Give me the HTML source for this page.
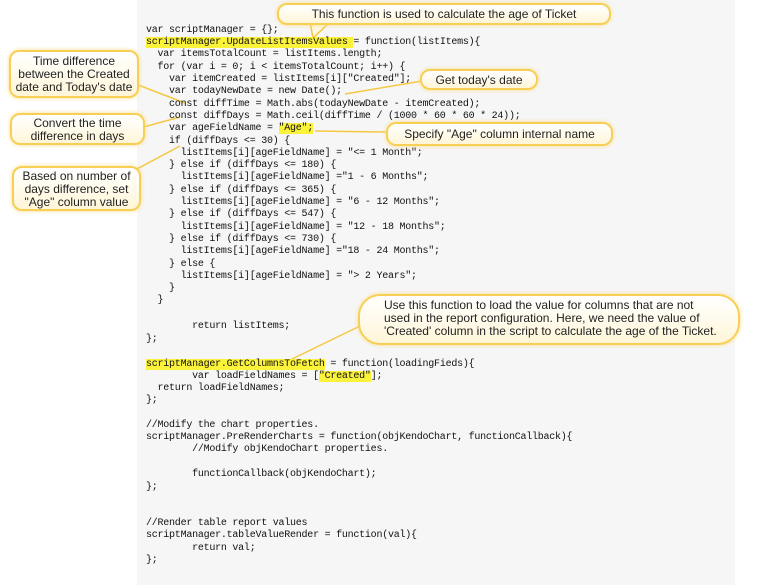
<!DOCTYPE html>
<html><head><style>
body{margin:0;width:768px;height:585px;background:#fff;position:relative;overflow:hidden;font-family:"Liberation Sans",sans-serif}
#panel{position:absolute;left:137px;top:0;width:598px;height:585px;background:#f6f6f6}
.l{position:absolute;left:146px;font-family:"Liberation Mono",monospace;font-size:10px;letter-spacing:-0.24px;color:#111;white-space:pre;line-height:12px;top:1px}
.hl{background:#fbf23a}
.c{position:absolute;border:2px solid #f7cf55;border-radius:10px;background:linear-gradient(#fff,#fff6d8);box-shadow:0 0 4px #f9dc8a;font-size:12px;color:#222;text-align:center;line-height:13px;box-sizing:border-box}
svg{position:absolute;left:0;top:0}
</style></head><body>
<div id="panel"></div>
<svg width="768" height="585"><g stroke="#f5c842" stroke-width="1.5" fill="#fff8e0">
<polygon points="310,22 330,22 313,38"/>
<line x1="120" y1="78" x2="185" y2="103"/>
<line x1="140" y1="128" x2="180" y2="117"/>
<line x1="120" y1="178" x2="180" y2="146"/>
<line x1="422" y1="81" x2="345" y2="94"/>
<line x1="386" y1="132" x2="315" y2="131"/>
<line x1="362" y1="325" x2="290" y2="360"/>
</g></svg>
<div class="l" style="top:25px">var scriptManager = {};</div>
<div class="l" style="top:37px"><span class="hl">scriptManager.UpdateListItemsValues </span>= function(listItems){</div>
<div class="l" style="top:49px">  var itemsTotalCount = listItems.length;</div>
<div class="l" style="top:62px">  for (var i = 0; i &lt; itemsTotalCount; i++) {</div>
<div class="l" style="top:74px">    var itemCreated = listItems[i]["Created"];</div>
<div class="l" style="top:86px">    var todayNewDate = new Date();</div>
<div class="l" style="top:99px">    const diffTime = Math.abs(todayNewDate - itemCreated);</div>
<div class="l" style="top:111px">    const diffDays = Math.ceil(diffTime / (1000 * 60 * 60 * 24));</div>
<div class="l" style="top:123px">    var ageFieldName = <span class="hl">"Age";</span></div>
<div class="l" style="top:136px">    if (diffDays &lt;= 30) {</div>
<div class="l" style="top:148px">      listItems[i][ageFieldName] = "&lt;= 1 Month";</div>
<div class="l" style="top:160px">    } else if (diffDays &lt;= 180) {</div>
<div class="l" style="top:172px">      listItems[i][ageFieldName] ="1 - 6 Months";</div>
<div class="l" style="top:185px">    } else if (diffDays &lt;= 365) {</div>
<div class="l" style="top:197px">      listItems[i][ageFieldName] = "6 - 12 Months";</div>
<div class="l" style="top:209px">    } else if (diffDays &lt;= 547) {</div>
<div class="l" style="top:222px">      listItems[i][ageFieldName] = "12 - 18 Months";</div>
<div class="l" style="top:234px">    } else if (diffDays &lt;= 730) {</div>
<div class="l" style="top:246px">      listItems[i][ageFieldName] ="18 - 24 Months";</div>
<div class="l" style="top:259px">    } else {</div>
<div class="l" style="top:271px">      listItems[i][ageFieldName] = "&gt; 2 Years";</div>
<div class="l" style="top:283px">    }</div>
<div class="l" style="top:295px">  }</div>
<div class="l" style="top:321px">        return listItems;</div>
<div class="l" style="top:334px">};</div>
<div class="l" style="top:359px"><span class="hl">scriptManager.GetColumnsToFetch</span> = function(loadingFieds){</div>
<div class="l" style="top:371px">        var loadFieldNames = [<span class="hl">"Created"</span>];</div>
<div class="l" style="top:383px">  return loadFieldNames;</div>
<div class="l" style="top:395px">};</div>
<div class="l" style="top:420px">//Modify the chart properties.</div>
<div class="l" style="top:432px">scriptManager.PreRenderCharts = function(objKendoChart, functionCallback){</div>
<div class="l" style="top:444px">        //Modify objKendoChart properties.</div>
<div class="l" style="top:469px">        functionCallback(objKendoChart);</div>
<div class="l" style="top:482px">};</div>
<div class="l" style="top:518px">//Render table report values</div>
<div class="l" style="top:530px">scriptManager.tableValueRender = function(val){</div>
<div class="l" style="top:543px">        return val;</div>
<div class="l" style="top:555px">};</div>

<div class="c" style="left:277px;top:3px;width:334px;height:22px;padding-top:3px">This function is used to calculate the age of Ticket</div>
<div class="c" style="left:9px;top:50px;width:130px;height:48px;padding-top:3px">Time difference<br>between the Created<br>date and Today's date</div>
<div class="c" style="left:10px;top:113px;width:135px;height:32px;padding-top:2px">Convert the time<br>difference in days</div>
<div class="c" style="left:12px;top:166px;width:129px;height:45px;padding-top:2px">Based on number of<br>days difference, set<br>"Age" column value</div>
<div class="c" style="left:420px;top:69px;width:118px;height:21px;padding-top:3px">Get today's date</div>
<div class="c" style="left:386px;top:122px;width:227px;height:24px;padding-top:4px">Specify "Age" column internal name</div>
<div class="c" style="left:358px;top:294px;width:382px;height:51px;padding:3px 0 0 24px;text-align:left;border-radius:22px">Use this function to load the value for columns that are not<br>used in the report configuration. Here, we need the value of<br>'Created' column in the script to calculate the age of the Ticket.</div>
</body></html>
